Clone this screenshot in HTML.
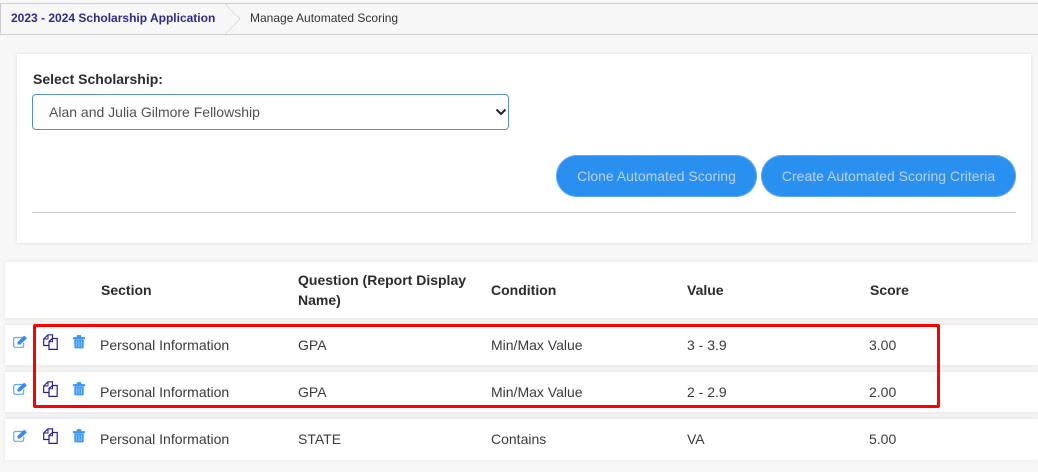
<!DOCTYPE html>
<html><head><meta charset="utf-8">
<style>
html,body{margin:0;padding:0}
body{width:1038px;height:472px;overflow:hidden;background:#f7f7f7;position:relative;font-family:"Liberation Sans",sans-serif;color:#333}
div,span{position:absolute;white-space:nowrap}
svg{position:absolute;display:block}
.t{font-size:14px;line-height:18px;color:#3a3a3a}
.h{font-size:14px;line-height:18px;font-weight:bold;color:#2b2b2b}
.row{left:5px;width:1033px;background:#fff;box-shadow:0 0 3px rgba(0,0,0,.08)}
.gap{left:5px;width:1033px;height:7px;background:#f2f2f2}
.btn{top:155px;height:42px;border-radius:21px;background:#2a90f0;color:#b9d2ea;font-size:14px;line-height:42px;text-align:center;box-shadow:inset 0 0 0 1px #5aa8f2}
</style></head><body>
<div style="left:0;top:3px;width:1038px;height:30px;background:#f7f7f7;border:1px solid #ccc;box-sizing:content-box"></div>
<svg style="left:225px;top:4px" width="20" height="30"><path d="M0 0L15 15L0 30" fill="none" stroke="#dcdcdc"/></svg>
<div style="left:11px;top:10px;font-size:12px;line-height:16px;font-weight:bold;color:#2f2a8c">2023 - 2024 Scholarship Application</div>
<div style="left:250px;top:10px;font-size:12px;line-height:16px;color:#333">Manage Automated Scoring</div>

<div style="left:17px;top:54px;width:1014px;height:189px;background:#fff;box-shadow:0 0 4px rgba(0,0,0,.12)"></div>
<div style="left:33px;top:71px;font-size:14px;line-height:17px;font-weight:bold;color:#2b2b2b">Select Scholarship:</div>
<div style="left:32px;top:94px;width:477px;height:36px;box-sizing:border-box;border:1px solid #5b8fc7;border-radius:4px;background:#fff"></div>
<div style="left:49px;top:103px;font-size:14px;line-height:18px;color:#505050">Alan and Julia Gilmore Fellowship</div>
<svg style="left:495px;top:108px" width="12" height="9"><path d="M1.5 1.5L6 6L10.5 1.5" fill="none" stroke="#222" stroke-width="2"/></svg>
<div class="btn" style="left:556px;width:201px">Clone Automated Scoring</div>
<div class="btn" style="left:761px;width:255px">Create Automated Scoring Criteria</div>
<div style="left:32px;top:212px;width:984px;height:1px;background:#ccc"></div>

<div class="gap" style="top:318px"></div>
<div class="gap" style="top:365px"></div>
<div class="gap" style="top:412px"></div>
<div class="row" style="top:262px;height:56px"></div>
<div class="h" style="left:101px;top:281px">Section</div>
<div class="h" style="left:298px;top:270px;line-height:20px">Question (Report Display<br>Name)</div>
<div class="h" style="left:491px;top:281px">Condition</div>
<div class="h" style="left:687px;top:281px">Value</div>
<div class="h" style="left:870px;top:281px">Score</div>

<div class="row" style="top:325px;height:40px"></div>
<div class="row" style="top:372px;height:40px"></div>
<div class="row" style="top:419px;height:41px"></div>

<div class="t" style="left:100px;top:336px">Personal Information</div><div class="t" style="left:298px;top:336px">GPA</div><div class="t" style="left:491px;top:336px">Min/Max Value</div><div class="t" style="left:687px;top:336px">3 - 3.9</div><div class="t" style="left:869px;top:336px">3.00</div>
<div class="t" style="left:100px;top:383px">Personal Information</div><div class="t" style="left:298px;top:383px">GPA</div><div class="t" style="left:491px;top:383px">Min/Max Value</div><div class="t" style="left:687px;top:383px">2 - 2.9</div><div class="t" style="left:869px;top:383px">2.00</div>
<div class="t" style="left:100px;top:430px">Personal Information</div><div class="t" style="left:298px;top:430px">STATE</div><div class="t" style="left:491px;top:430px">Contains</div><div class="t" style="left:687px;top:430px">VA</div><div class="t" style="left:869px;top:430px">5.00</div>

<svg width="0" height="0"><defs>
<g id="e"><path d="M9.5 2.5H2.5Q.7 2.5 .7 4.3V10.5Q.7 12.3 2.5 12.3H9Q10.7 12.3 10.7 10.5V7.5" fill="none" stroke="#62a8f5" stroke-width="1.2"/><path d="M4.5 9.5V7L10.5 1.2Q11.2 .6 11.9 1.2L13.4 2.7Q14 3.4 13.4 4L7 9.5Z" fill="#3a8ae8"/></g>
<g id="c" fill="none" stroke="#2a1f8f" stroke-width="1.2"><path d="M6 11.5H.7V5L5 .8H9.5V4.5"/><path d="M5 .8V5H.7" stroke-width="1"/><path d="M6 7.5L9.5 4.5H14.2V15.4H6Z"/><path d="M9.5 4.5V7.8H6" stroke-width="1"/></g>
<g id="d"><path d="M.3 2.4H11.7V4H.3ZM3.7 2.4L4.3 .4H7.7L8.3 2.4" fill="#3a97f2" stroke="#3a97f2" stroke-width=".6"/><path d="M1.3 4.5H10.7V12.3Q10.7 13.4 9.6 13.4H2.4Q1.3 13.4 1.3 12.3Z" fill="#3a97f2"/><path d="M3.7 5.7V12.2M6 5.7V12.2M8.3 5.7V12.2" stroke="#a8d0f8" stroke-width=".8"/></g>
</defs></svg>
<svg style="left:13px;top:335px" width="15" height="14"><use href="#e"/></svg>
<svg style="left:43px;top:334px" width="15" height="16"><use href="#c"/></svg>
<svg style="left:73px;top:335px" width="12" height="14"><use href="#d"/></svg>
<svg style="left:13px;top:382px" width="15" height="14"><use href="#e"/></svg>
<svg style="left:43px;top:381px" width="15" height="16"><use href="#c"/></svg>
<svg style="left:73px;top:382px" width="12" height="14"><use href="#d"/></svg>
<svg style="left:13px;top:429px" width="15" height="14"><use href="#e"/></svg>
<svg style="left:43px;top:428px" width="15" height="16"><use href="#c"/></svg>
<svg style="left:73px;top:429px" width="12" height="14"><use href="#d"/></svg>

<div style="left:33px;top:324px;width:907px;height:84px;box-sizing:border-box;border:3px solid #f00;border-radius:2px"></div>
</body></html>
